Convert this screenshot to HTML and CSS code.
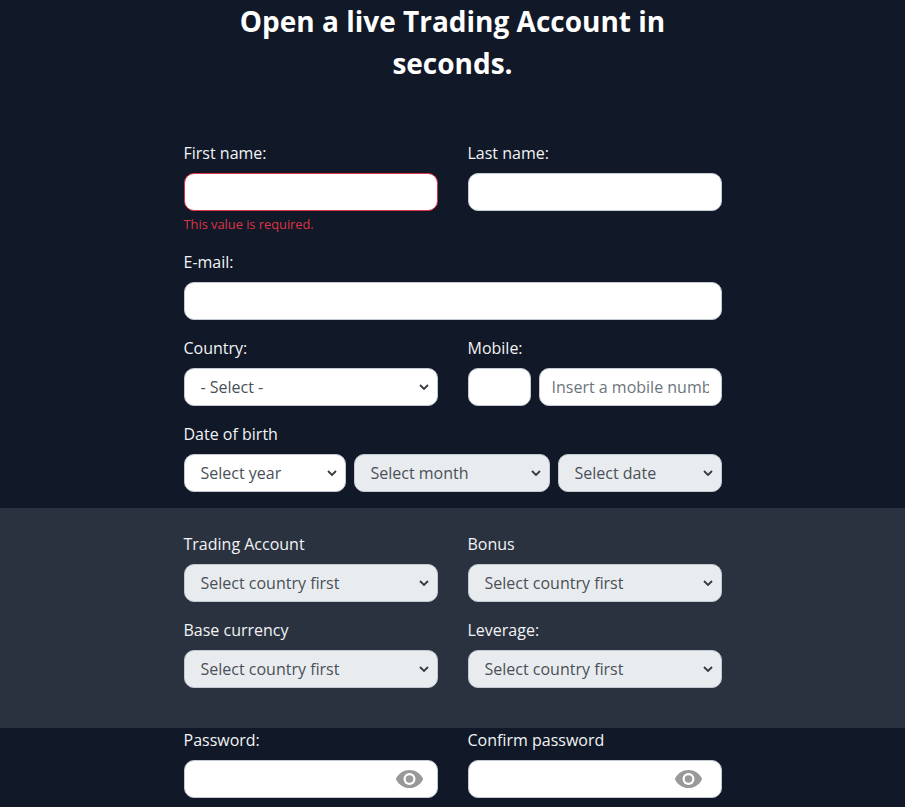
FILE: index.html
```html
<!DOCTYPE html>
<html lang="en">
<head>
  <meta charset="UTF-8">
  <title>Open a live Trading Account</title>
  <meta name="viewport" content="width=device-width, initial-scale=1.0">
  <link rel="stylesheet" href="styles.css">
</head>
<body>

  <h1 class="title">Open a live Trading Account in seconds.</h1>

  <form>
    <div class="section section-top">
      <div class="wrap">
        <div class="row">
          <div class="field">
            <label for="firstName">First name:</label>
            <input type="text" id="firstName" class="input invalid">
            <div class="error">This value is required.</div>
          </div>
          <div class="field">
            <label for="lastName">Last name:</label>
            <input type="text" id="lastName" class="input">
          </div>
        </div>

        <div class="field">
          <label for="email">E-mail:</label>
          <input type="text" id="email" class="input">
        </div>

        <div class="row">
          <div class="field">
            <label for="country">Country:</label>
            <select id="country" class="input select"><option>- Select -</option></select>
          </div>
          <div class="field">
            <label for="mobile">Mobile:</label>
            <div class="mobile-row">
              <input type="text" class="input">
              <input type="text" id="mobile" class="input" placeholder="Insert a mobile number">
            </div>
          </div>
        </div>

        <div class="field">
          <label for="year">Date of birth</label>
          <div class="dob-row">
            <select id="year" class="input select"><option>Select year</option></select>
            <select class="input select" disabled><option>Select month</option></select>
            <select class="input select" disabled><option>Select date</option></select>
          </div>
        </div>
      </div>
    </div>

    <div class="section section-account">
      <div class="wrap">
        <div class="row">
          <div class="field">
            <label>Trading Account</label>
            <select class="input select" disabled><option>Select country first</option></select>
          </div>
          <div class="field">
            <label>Bonus</label>
            <select class="input select" disabled><option>Select country first</option></select>
          </div>
        </div>
        <div class="row">
          <div class="field">
            <label>Base currency</label>
            <select class="input select" disabled><option>Select country first</option></select>
          </div>
          <div class="field">
            <label>Leverage:</label>
            <select class="input select" disabled><option>Select country first</option></select>
          </div>
        </div>
      </div>
    </div>

    <div class="section">
      <div class="wrap">
        <div class="row">
          <div class="field">
            <label for="password">Password:</label>
            <div class="password-box">
              <input type="password" id="password" class="input">
              <svg class="eye eye-left" viewBox="0 0 576 512"><path class="eye-body" d="M572.52 241.4C518.29 135.59 410.93 64 288 64S57.68 135.64 3.48 241.41a32.35 32.35 0 0 0 0 29.19C57.71 376.41 165.07 448 288 448s230.32-71.64 284.52-177.41a32.35 32.35 0 0 0 0-29.19z"/><circle class="eye-ring" cx="288" cy="256" r="128"/><circle class="eye-body" cx="288" cy="256" r="80"/></svg>
            </div>
          </div>
          <div class="field">
            <label for="confirm">Confirm password</label>
            <div class="password-box">
              <input type="password" id="confirm" class="input">
              <svg class="eye eye-right" viewBox="0 0 576 512"><path class="eye-body" d="M572.52 241.4C518.29 135.59 410.93 64 288 64S57.68 135.64 3.48 241.41a32.35 32.35 0 0 0 0 29.19C57.71 376.41 165.07 448 288 448s230.32-71.64 284.52-177.41a32.35 32.35 0 0 0 0-29.19z"/><circle class="eye-ring" cx="288" cy="256" r="128"/><circle class="eye-body" cx="288" cy="256" r="80"/></svg>
            </div>
          </div>
        </div>
      </div>
    </div>
  </form>

</body>
</html>
```

FILE: styles.css
```css
html, body {
  margin: 0;
  padding: 0;
  background: #111827;
  color: #f1f3f5;
  font-family: "Open Sans", sans-serif;
  font-size: 16px;
  line-height: 1.5;
  overflow: hidden;
}

.title {
  width: 480px;
  margin: 0 auto 57px;
  color: #fff;
  font-size: 28px;
  font-weight: 700;
  line-height: 42px;
  text-align: center;
}

.section-account {
  padding: 24px 0 8px;
  background: #2a3240;
  height: 220px;
  box-sizing: border-box;
}

.wrap {
  width: 538px;
  margin: 0 auto;
}

.row {
  display: grid;
  grid-template-columns: 254px 254px;
  column-gap: 30px;
}

.field {
  margin-bottom: 16px;
}

label {
  display: block;
  margin-bottom: 8px;
}

.input {
  display: block;
  width: 100%;
  height: 38px;
  box-sizing: border-box;
  padding: 6px 12px;
  border: 1px solid #c3c9d3;
  border-radius: 10px;
  background-color: #fff;
  color: #495057;
  font-family: inherit;
  font-size: 16px;
  line-height: 1.5;
  outline: none;
}

.input::placeholder {
  color: #6c757d;
  opacity: 1;
}

.select {
  appearance: none;
  padding-left: 16px;
  padding-right: 36px;
  background-image: url("data:image/svg+xml,%3csvg xmlns='http://www.w3.org/2000/svg' viewBox='0 0 10 6'%3e%3cpath fill='none' stroke='%23343a40' stroke-width='1.8' d='M1 1l4 4 4-4'/%3e%3c/svg%3e");
  background-repeat: no-repeat;
  background-position: right 8px center;
  background-size: 10px 6px;
}

.select:disabled {
  background-color: #e9ecef;
  opacity: 1;
}

.invalid {
  border-color: #dc3545;
}

.error {
  margin-top: 4px;
  color: #dc3545;
  font-size: 12.8px;
}

.mobile-row {
  display: grid;
  grid-template-columns: 63px 183px;
  column-gap: 8px;
}

.dob-row {
  display: grid;
  grid-template-columns: 162px 196px 164px;
  column-gap: 8px;
}

.password-box {
  position: relative;
}

.eye {
  position: absolute;
  top: 7px;
  width: 27px;
  height: 24px;
}

.eye-body {
  fill: #999;
}

.eye-ring {
  fill: #fff;
}

.eye-left {
  right: 15px;
}

.eye-right {
  right: 20px;
}
```
